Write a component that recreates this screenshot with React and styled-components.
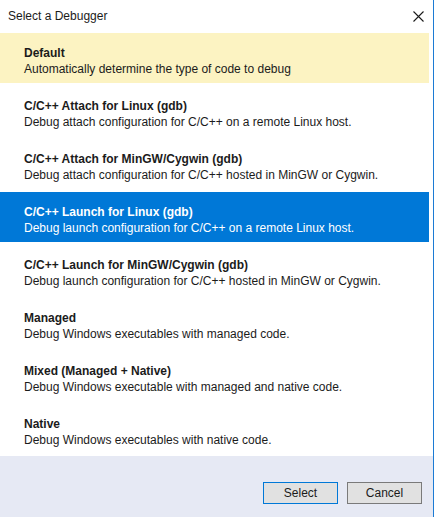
import React from "react";
import styled, { createGlobalStyle } from "styled-components";

const GlobalStyle = createGlobalStyle`
  html, body {
    margin: 0;
    padding: 0;
    background: #ffffff;
  }
  * {
    box-sizing: border-box;
  }
`;

const debuggers = [
  { name: "Default", desc: "Automatically determine the type of code to debug", state: "default" },
  { name: "C/C++ Attach for Linux (gdb)", desc: "Debug attach configuration for C/C++ on a remote Linux host." },
  { name: "C/C++ Attach for MinGW/Cygwin (gdb)", desc: "Debug attach configuration for C/C++ hosted in MinGW or Cygwin." },
  { name: "C/C++ Launch for Linux (gdb)", desc: "Debug launch configuration for C/C++ on a remote Linux host.", state: "selected" },
  { name: "C/C++ Launch for MinGW/Cygwin (gdb)", desc: "Debug launch configuration for C/C++ hosted in MinGW or Cygwin." },
  { name: "Managed", desc: "Debug Windows executables with managed code." },
  { name: "Mixed (Managed + Native)", desc: "Debug Windows executable with managed and native code." },
  { name: "Native", desc: "Debug Windows executables with native code." },
];

function App() {
  return (
    <>
      <GlobalStyle />
      <Window>
        <TitleBar>
          <Title>Select a Debugger</Title>
          <CloseButton aria-label="Close">
            <svg width="11" height="11" viewBox="0 0 11 11">
              <path d="M0.5 0.5 L10.5 10.5 M10.5 0.5 L0.5 10.5" stroke="#1a1a1a" strokeWidth="1.1" fill="none" />
            </svg>
          </CloseButton>
        </TitleBar>
        <List>
          {debuggers.map((d) => (
            <Item key={d.name} $state={d.state}>
              <ItemName>{d.name}</ItemName>
              <ItemDesc>{d.desc}</ItemDesc>
            </Item>
          ))}
        </List>
        <Footer>
          <Button $primary>Select</Button>
          <Button>Cancel</Button>
        </Footer>
      </Window>
    </>
  );
}

const Window = styled.div`
  width: 434px;
  height: 517px;
  display: flex;
  flex-direction: column;
  background: #ffffff;
  border-right: 1px solid #1c7bd4;
  font-family: "Segoe UI", "Liberation Sans", Arial, sans-serif;
  font-size: 12px;
  color: #1b1b1b;
`;

const TitleBar = styled.div`
  height: 33px;
  display: flex;
  align-items: center;
  justify-content: space-between;
  padding: 0 8px 1px 8px;
`;

const Title = styled.div`
  font-size: 12px;
`;

const CloseButton = styled.div`
  display: flex;
  align-items: center;
  justify-content: center;
  width: 14px;
  height: 14px;
`;

const List = styled.div`
  display: flex;
  flex-direction: column;
  gap: 3px;
  padding-right: 4px;
  height: 423px;
`;

const Item = styled.div`
  height: 50px;
  padding: 12px 24px 0;
  background: ${(p) =>
    p.$state === "default" ? "#fcf3c2" : p.$state === "selected" ? "#0078d7" : "transparent"};
  color: ${(p) => (p.$state === "selected" ? "#ffffff" : "#1b1b1b")};
`;

const ItemName = styled.div`
  font-weight: bold;
  line-height: 16px;
`;

const ItemDesc = styled.div`
  line-height: 16px;
`;

const Footer = styled.div`
  flex: 1;
  background: #e6e9f4;
  display: flex;
  justify-content: flex-end;
  align-items: flex-start;
  gap: 9px;
  padding: 26px 11px 0 0;
`;

const Button = styled.div`
  width: 75px;
  height: 22px;
  display: flex;
  align-items: center;
  justify-content: center;
  background: #e1e1e1;
  border: 1px solid ${(p) => (p.$primary ? "#0078d7" : "#7a7a7a")};
  font-size: 12px;
  color: #1b1b1b;
`;

export default App;
